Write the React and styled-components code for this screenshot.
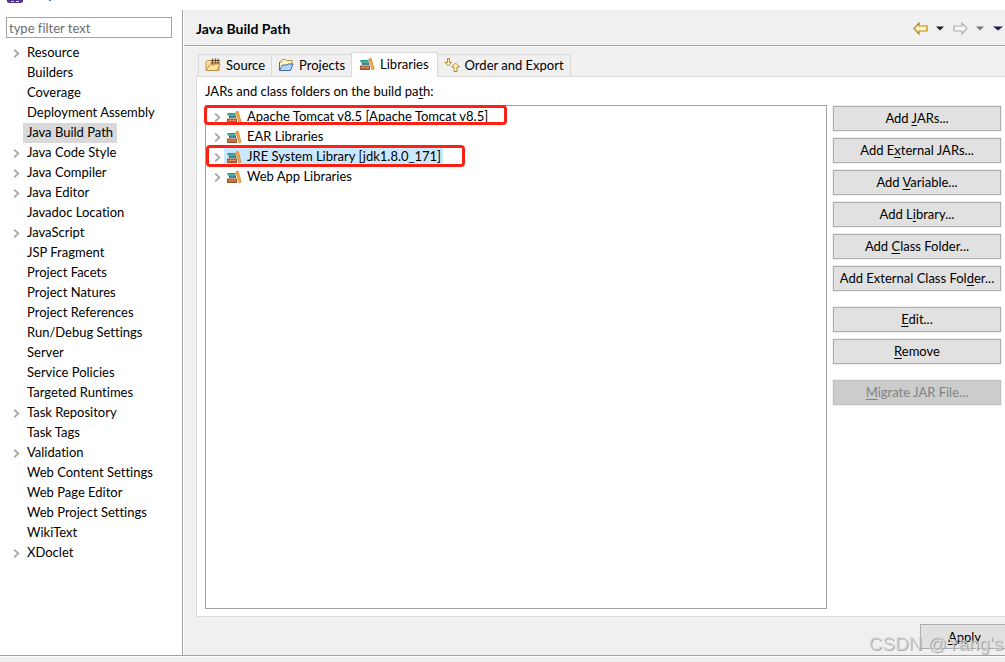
import * as React from 'react';
import styled, { createGlobalStyle } from 'styled-components';

const GlobalStyle = createGlobalStyle`
  * {
    box-sizing: border-box;
  }
  body {
    margin: 0;
    background: #fff;
    color: #000;
  }
  body, button, input {
    font-family: Lato, 'Noto Sans', sans-serif;
    font-size: 13px;
    font-variant-ligatures: none;
    line-height: 18px;
  }
`;

const Dialog = styled.div`
  display: flex;
  flex-direction: column;
  height: 100vh;
  overflow: hidden;
`;
const TitleBar = styled.header`
  display: flex;
  align-items: flex-end;
  flex: none;
  gap: 6px;
  height: 10px;
  padding: 0 7px 7px;
`;
const TitleText = styled.span`
  line-height: 18px;
`;
const Body = styled.div`
  display: flex;
  flex: 1;
  min-height: 0;
`;
const Sidebar = styled.nav`
  flex: none;
  width: 183px;
  border-right: 1px solid #a0a0a0;
  padding: 7px 10px 0 6px;
`;
const FilterInput = styled.input`
  display: block;
  width: 100%;
  height: 21px;
  border: 1px solid #a5a5a8;
  padding: 0 2px;
  background: #fff;
  &::placeholder {
    color: #6d6d6d;
    opacity: 1;
  }
`;
const List = styled.ul`
  margin: 0;
  padding: 0;
  list-style: none;
`;
const PageList = styled(List)`
  padding: 5px 0 0 4px;
`;
const PageItem = styled.li`
  display: flex;
  align-items: center;
  height: 20px;
`;
const ExpandSlot = styled.span`
  display: flex;
  align-items: center;
  justify-content: center;
  flex: none;
  width: 13px;
`;
const PageLink = styled.a`
  padding: 0 4px 2px;
  color: #000;
  text-decoration: none;
  white-space: nowrap;
  background: ${props => (props.$active ? '#d9d9d9' : 'none')};
`;
const Main = styled.main`
  display: flex;
  flex-direction: column;
  flex: 1;
  min-width: 0;
  margin-left: 1px;
  background: #f0f0f0;
`;
const PageHeader = styled.div`
  display: flex;
  align-items: center;
  justify-content: space-between;
  flex: none;
  height: 36px;
  padding: 2px 0 0 12px;
  border-bottom: 1px solid #a0a0a0;
  box-shadow: 0 1px #fff;
`;
const PageTitle = styled.h1`
  margin: 0;
  font-size: 14px;
  line-height: 20px;
`;
const NavButtons = styled.div`
  display: flex;
  align-items: center;
  margin-right: -2px;
`;
const NavButton = styled.button`
  display: flex;
  align-items: center;
  justify-content: center;
  width: ${props => (props.$narrow ? '18px' : '22px')};
  height: 20px;
  border: none;
  padding: 0;
  background: none;
`;
const TabList = styled.div`
  display: flex;
  align-items: flex-end;
  flex: none;
  height: 31px;
  margin: 0 0 -1px 15px;
`;
const Tab = styled.button`
  display: flex;
  align-items: center;
  gap: 5px;
  position: relative;
  height: ${props => (props.$active ? '25px' : '23px')};
  border: 1px solid #d9d9d9;
  border-bottom: ${props => (props.$active ? 'none' : '1px solid #d9d9d9')};
  margin-left: -1px;
  padding: ${props => (props.$active ? '0 8px 3px 7px' : '0 6px 1px')};
  background: ${props => (props.$active ? '#fff' : '#f0f0f0')};
  color: #000;
  white-space: nowrap;
`;
const TabPanel = styled.section`
  display: grid;
  grid-template-columns: 1fr 168px;
  grid-template-rows: 28px 1fr;
  column-gap: 6px;
  flex: 1;
  min-height: 0;
  margin-left: 12px;
  border: 1px solid #d9d9d9;
  border-right: none;
  padding: 0 4px 7px 8px;
  background: #fff;
`;
const PanelLabel = styled.div`
  grid-column: 1 / -1;
  padding-top: 5px;
`;
const Tree = styled(List)`
  border: 1px solid #a0a0a4;
  padding-top: 1px;
`;
const TreeItem = styled.li`
  display: flex;
  align-items: center;
  position: relative;
  height: 20px;
  padding-left: 5px;
`;
const TreeLabel = styled.span`
  display: flex;
  align-items: center;
  gap: 5px;
  padding: 0 2px;
  background: ${props => (props.$selected ? '#cce8ff' : 'none')};
  white-space: nowrap;
`;
const TreeText = styled.span`
  padding-bottom: 2px;
`;
const Outline = styled.span`
  position: absolute;
  inset: ${props => (props.$wide ? '-2px auto 2px -2px' : '-2px auto 0 0')};
  width: ${props => (props.$wide ? '303px' : '259px')};
  border: 3px solid #fb2115;
  border-radius: 4px;
`;
const ButtonColumn = styled.div`
  display: flex;
  flex-direction: column;
  gap: 7px;
  padding-top: 1px;
`;
const PushButton = styled.button`
  height: 25px;
  margin-top: ${props => (props.$spaced ? '9px' : '0')};
  border: 1px solid #adadad;
  padding: 0 3px 2px;
  background: #e1e1e1;
  box-shadow: 0 0 0 1px #f0f0f0;
  color: #000;
  white-space: nowrap;
  &:disabled {
    border-color: #bfbfbf;
    background: #ccc;
    color: #838383;
  }
`;
const Mnemonic = styled.span`
  text-decoration: underline;
  text-underline-offset: 2px;
`;
const ApplyBar = styled.div`
  display: flex;
  justify-content: flex-end;
  flex: none;
  height: 38px;
  padding-top: 7px;
`;
const ApplyButton = styled(PushButton)`
  width: 89px;
  margin-right: -4px;
  padding-bottom: 0;
`;
const Footer = styled.footer`
  flex: none;
  height: 7px;
  border-top: 1px solid #a0a0a0;
  background: #f0f0f0;
  box-shadow: inset 0 1px #fff;
`;
const Watermark = styled.span`
  position: fixed;
  right: 2px;
  bottom: 6px;
  color: rgba(215, 215, 215, 0.75);
  font-family: 'Liberation Sans', sans-serif;
  font-size: 19px;
  line-height: 24px;
  text-shadow: 1px 1px rgba(130, 130, 130, 0.6);
  white-space: nowrap;
  pointer-events: none;
`;

const Chevron = () => (
  <svg width="7" height="9" viewBox="0 0 7 9" fill="none" stroke="#a6a6a6" strokeWidth="1.8">
    <path d="M1.2 .7 5.300 4.500 1.200 8.300" />
  </svg>
);
const SourceIcon = () => (
  <svg width="16" height="16" viewBox="0 0 16 16">
    <path d="M1 13V5l1.500-1.500H6l1 2h7v8z" fill="#fbe3a0" stroke="#c1903f" />
    <path d="M5.500 2.500h8v5h-8z" fill="#f0cfa0" />
    <path d="M7.500 1.500v6M10.500 1.500v6M13 1.500v6M5.500 3.500H15M5.500 6H15" stroke="#704a2c" />
    <path d="M1 13.500 4.500 8H9l1-1h5l-3 6.500z" fill="#fde3a4" stroke="#c1903f" />
  </svg>
);
const ProjectsIcon = () => (
  <svg width="16" height="16" viewBox="0 0 16 16">
    <path d="M1.500 13V5h2V3.500L4.500 2.500h3l1 1H14V8" fill="#fff3c4" stroke="#b58a35" />
    <path d="M1.500 13V5" stroke="#3f69ae" />
    <path d="M1.500 13.500 4.500 8H9l1-1h5l-2.500 6.500z" fill="#b4d5fa" stroke="#3f69ae" />
  </svg>
);
const LibraryIcon = () => (
  <svg width="16" height="16" viewBox="0 0 16 16">
    <path d="M1.500 4h8v2.500h-8z" fill="#189c76" />
    <path d="M3 6.500h7V9H3z" fill="#28688c" />
    <path d="M3 5.500h6M4 8h5" stroke="#4fb3a8" />
    <path d="M1 9.500h10V14H1z" fill="#a5532f" />
    <path d="M2 11.500h8" stroke="#d9895c" strokeWidth="1.500" />
    <path d="m9.800 3 2.200-1 3.200 11-2.200.8z" fill="#f3ab3c" stroke="#c57b27" strokeWidth=".6" />
  </svg>
);
const OrderIcon = () => (
  <svg width="16" height="16" viewBox="0 0 16 16" fill="#fff2c4" stroke="#bd8a29">
    <path d="M3.500 1.500h2v4h2L4.500 9 1 5.500h2.500z" />
    <path d="m11.500 6 4 4h-2.500v4.500h-3V10H7.500z" />
  </svg>
);
const Arrow = ({ flip }) => (
  <svg width="15" height="13" viewBox="0 0 15 13">
    <path
      d={flip ? 'M14 6.500 9 1v3H1v5h8v3z' : 'M1 6.500 6 1v3h8v5H6v3z'}
      fill={flip ? '#f6f6f6' : '#fff6c8'}
      stroke={flip ? '#b2b2b2' : '#bd831b'}
      strokeWidth="1.2"
    />
  </svg>
);
const Caret = ({ color, width = 8 }) => (
  <svg width={width} height="5" viewBox="0 0 8 5" preserveAspectRatio="none">
    <path d="M0 .5h8L4 4.500z" fill={color} />
  </svg>
);

const pages = [
  ['Resource', true],
  ['Builders'],
  ['Coverage'],
  ['Deployment Assembly'],
  ['Java Build Path'],
  ['Java Code Style', true],
  ['Java Compiler', true],
  ['Java Editor', true],
  ['Javadoc Location'],
  ['JavaScript', true],
  ['JSP Fragment'],
  ['Project Facets'],
  ['Project Natures'],
  ['Project References'],
  ['Run/Debug Settings'],
  ['Server'],
  ['Service Policies'],
  ['Targeted Runtimes'],
  ['Task Repository', true],
  ['Task Tags'],
  ['Validation', true],
  ['Web Content Settings'],
  ['Web Page Editor'],
  ['Web Project Settings'],
  ['WikiText'],
  ['XDoclet', true]
];

const tabs = [
  { name: 'Source', Icon: SourceIcon },
  { name: 'Projects', Icon: ProjectsIcon },
  { name: 'Libraries', Icon: LibraryIcon },
  { name: 'Order and Export', Icon: OrderIcon }
];

const libraries = [
  { name: 'Apache Tomcat v8.5 [Apache Tomcat v8.5]', outline: 'wide' },
  { name: 'EAR Libraries' },
  { name: 'JRE System Library [jdk1.8.0_171]', outline: 'narrow', selected: true },
  { name: 'Web App Libraries' }
];

// "&" marks the mnemonic letter
const actions = [
  { label: 'Add &JARs...' },
  { label: 'Add E&xternal JARs...' },
  { label: 'Add &Variable...' },
  { label: 'Add L&ibrary...' },
  { label: 'Add &Class Folder...' },
  { label: 'Add External Class Fol&der...' },
  { label: '&Edit...', spaced: true },
  { label: '&Remove' },
  { label: '&Migrate JAR File...', spaced: true, disabled: true }
];

const Label = ({ text }) => {
  const [before, rest] = text.split('&');
  return (
    <span>
      {before}
      <Mnemonic>{rest[0]}</Mnemonic>
      {rest.slice(1)}
    </span>
  );
};

function App() {
  const [page, setPage] = React.useState('Java Build Path');
  const [tab, setTab] = React.useState('Libraries');

  return (
    <Dialog>
      <GlobalStyle />
      <TitleBar>
        <svg width="16" height="16" viewBox="0 0 16 16">
          <path d="M0 0h16v15l-2 1H2l-2-1z" fill="#50368a" />
          <path d="M4 14.500h3M9 14.500h3" stroke="#d8cfee" />
        </svg>
        <TitleText>Properties</TitleText>
      </TitleBar>
      <Body>
        <Sidebar>
          <FilterInput type="text" aria-label="Filter" placeholder="type filter text" />
          <PageList>
            {pages.map(([name, expandable]) => (
              <PageItem key={name}>
                <ExpandSlot>{expandable && <Chevron />}</ExpandSlot>
                <PageLink href="#" $active={name === page} onClick={() => setPage(name)}>
                  {name}
                </PageLink>
              </PageItem>
            ))}
          </PageList>
        </Sidebar>
        <Main>
          <PageHeader>
            <PageTitle>Java Build Path</PageTitle>
            <NavButtons>
              <NavButton type="button" aria-label="Back">
                <Arrow />
              </NavButton>
              <NavButton type="button" aria-label="Back history" $narrow>
                <Caret color="#222" />
              </NavButton>
              <NavButton type="button" aria-label="Forward">
                <Arrow flip />
              </NavButton>
              <NavButton type="button" aria-label="Forward history" $narrow>
                <Caret color="#777" />
              </NavButton>
              <NavButton type="button" aria-label="Menu" $narrow>
                <Caret color="#2a1450" width={10} />
              </NavButton>
            </NavButtons>
          </PageHeader>
          <TabList role="tablist">
            {tabs.map(({ name, Icon }) => (
              <Tab
                key={name}
                type="button"
                role="tab"
                aria-selected={name === tab}
                $active={name === tab}
                onClick={() => setTab(name)}
              >
                <Icon />
                {name}
              </Tab>
            ))}
          </TabList>
          <TabPanel>
            <PanelLabel>
              <Label text="JARs and class folders on the build pa&th:" />
            </PanelLabel>
            <Tree>
              {libraries.map(({ name, outline, selected }) => (
                <TreeItem key={name}>
                  <ExpandSlot>
                    <Chevron />
                  </ExpandSlot>
                  <TreeLabel $selected={selected}>
                    <LibraryIcon />
                    <TreeText>{name}</TreeText>
                  </TreeLabel>
                  {outline && <Outline $wide={outline === 'wide'} />}
                </TreeItem>
              ))}
            </Tree>
            <ButtonColumn>
              {actions.map(({ label, spaced, disabled }) => (
                <PushButton key={label} type="button" disabled={disabled} $spaced={spaced}>
                  <Label text={label} />
                </PushButton>
              ))}
            </ButtonColumn>
          </TabPanel>
          <ApplyBar>
            <ApplyButton type="button">
              <Label text="&Apply" />
            </ApplyButton>
          </ApplyBar>
        </Main>
      </Body>
      <Footer />
      <Watermark>CSDN @Yang's</Watermark>
    </Dialog>
  );
}

export default App;
